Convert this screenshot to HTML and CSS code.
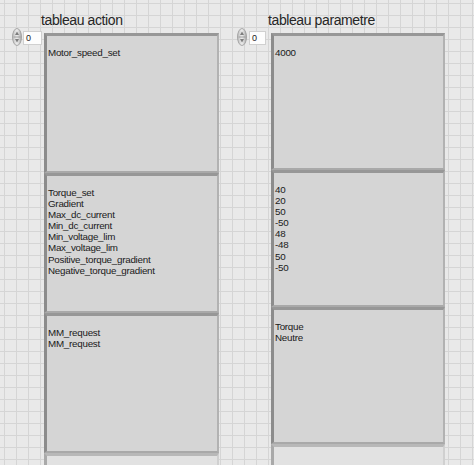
FILE: index.html
```html
<!DOCTYPE html>
<html>
<head>
<meta charset="utf-8">
<link rel="stylesheet" href="styles.css">
</head>
<body>
<div class="panel">
  <div class="control control-left">
    <div class="label">tableau action</div>
    <div class="body">
      <div class="index">
        <svg class="spin" width="10" height="18" viewBox="0 0 10 18">
          <defs>
            <linearGradient id="g1" x1="0" y1="0" x2="1" y2="0">
              <stop offset="0" stop-color="#bdbdbd"/>
              <stop offset="0.5" stop-color="#eeeeee"/>
              <stop offset="1" stop-color="#a9a9a9"/>
            </linearGradient>
          </defs>
          <ellipse cx="5" cy="9" rx="4.5" ry="8.5" fill="url(#g1)" stroke="#999999" stroke-width="0.8"/>
          <line x1="1.5" y1="9" x2="8.5" y2="9" stroke="#8f8f8f" stroke-width="0.8"/>
          <path d="M5 3.5 L7 7 L3 7 Z" fill="#7e7e7e"/>
          <path d="M5 14.5 L7 11 L3 11 Z" fill="#7e7e7e"/>
        </svg>
        <div class="num">0</div>
      </div>
      <div class="array">
        <div class="cell">Motor_speed_set</div>
        <div class="cell">Torque_set<br>Gradient<br>Max_dc_current<br>Min_dc_current<br>Min_voltage_lim<br>Max_voltage_lim<br>Positive_torque_gradient<br>Negative_torque_gradient</div>
        <div class="cell">MM_request<br>MM_request</div>
        <div class="cell empty"></div>
      </div>
    </div>
  </div>
  <div class="control control-right">
    <div class="label">tableau parametre</div>
    <div class="body">
      <div class="index">
        <svg class="spin" width="10" height="18" viewBox="0 0 10 18">
          <defs>
            <linearGradient id="g2" x1="0" y1="0" x2="1" y2="0">
              <stop offset="0" stop-color="#bdbdbd"/>
              <stop offset="0.5" stop-color="#eeeeee"/>
              <stop offset="1" stop-color="#a9a9a9"/>
            </linearGradient>
          </defs>
          <ellipse cx="5" cy="9" rx="4.5" ry="8.5" fill="url(#g2)" stroke="#999999" stroke-width="0.8"/>
          <line x1="1.5" y1="9" x2="8.5" y2="9" stroke="#8f8f8f" stroke-width="0.8"/>
          <path d="M5 3.5 L7 7 L3 7 Z" fill="#7e7e7e"/>
          <path d="M5 14.5 L7 11 L3 11 Z" fill="#7e7e7e"/>
        </svg>
        <div class="num">0</div>
      </div>
      <div class="array">
        <div class="cell">4000</div>
        <div class="cell">40<br>20<br>50<br>-50<br>48<br>-48<br>50<br>-50</div>
        <div class="cell">Torque<br>Neutre</div>
        <div class="cell empty"></div>
      </div>
    </div>
  </div>
</div>
</body>
</html>
```

FILE: styles.css
```css
html, body {
  margin: 0;
  padding: 0;
  width: 474px;
  height: 465px;
  overflow: hidden;
}

body {
  background-color: #e9e9e9;
  background-image:
    linear-gradient(to right, #d5d5d5 1px, transparent 1px),
    linear-gradient(to bottom, #d5d5d5 1px, transparent 1px);
  background-size: 12px 12px;
  background-position: 4px 3px;
  font-family: "Liberation Sans", Arial, sans-serif;
  color: #222;
}

.panel {
  display: flex;
  align-items: flex-start;
  gap: 18px;
  height: 465px;
  box-sizing: border-box;
  overflow: hidden;
  padding: 12px 0 0 12px;
}

.control {
  display: flex;
  flex-direction: column;
}

.label {
  height: 21px;
  font-size: 14px;
  line-height: 16px;
  letter-spacing: -0.4px;
  color: #262626;
  white-space: nowrap;
}

.control-left .label { margin-left: 29px; }
.control-right .label { margin-left: 31px; }

.body {
  display: flex;
  align-items: flex-start;
}

.index {
  display: flex;
  align-items: center;
  gap: 1px;
  margin-top: -5px;
}

.control-left .index { width: 32px; }
.control-right .index { width: 34px; }
.control-right .index .num { width: 17px; margin-left: 1px; }

.spin {
  display: block;
  flex: none;
}

.num {
  width: 19px;
  height: 14px;
  margin-top: 2px;
  background: #fdfdfd;
  border: 1px solid #d0d0d0;
  box-sizing: border-box;
  font-size: 9px;
  line-height: 12px;
  padding-left: 2px;
  color: #222;
}

.array {
  display: flex;
  flex-direction: column;
}

.control-left .array { width: 175px; }
.control-right .array { width: 174px; }

.cell {
  box-sizing: border-box;
  background: #d5d5d5;
  border-top: 3px solid #979797;
  border-left: 3px solid #8c8c8c;
  border-right: 2px solid #b2b2b2;
  border-bottom: 2px solid #a9a9a9;
  padding: 11px 0 0 1px;
  font-size: 9.8px;
  line-height: 11.1px;
  letter-spacing: -0.25px;
  color: #1a1a1a;
  white-space: nowrap;
}

.control-left .cell { height: 140px; flex: none; }
.control-right .cell { height: 137px; flex: none; }

.cell.empty {
  background: #e2e2e2;
  border-top-color: #b8b8b8;
  border-left-color: #a9a9a9;
  border-right-color: #d0d0d0;
}
```
